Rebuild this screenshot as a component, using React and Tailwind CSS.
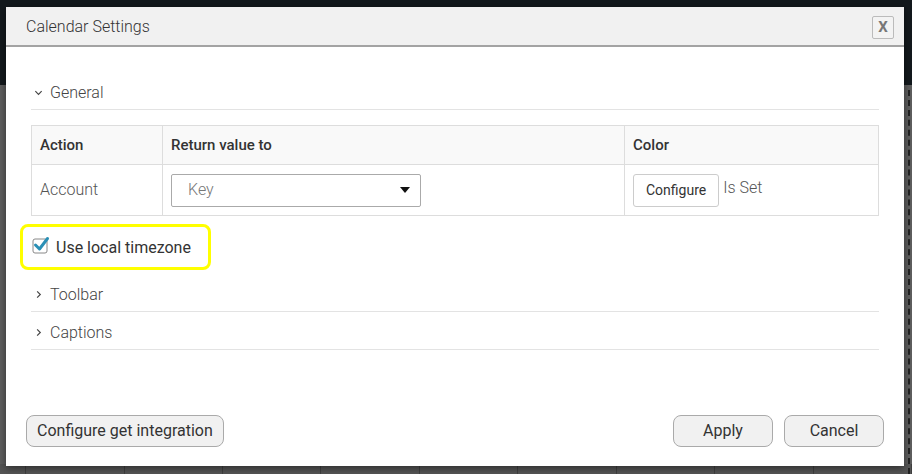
import React from "react";

function Chevron({ down }) {
  return (
    <svg width="9" height="9" viewBox="0 0 10 10" className="shrink-0">
      {down ? (
        <path d="M1.5 3.5 L5 7 L8.5 3.5" fill="none" stroke="#444" strokeWidth="1.3" />
      ) : (
        <path d="M3.5 1.5 L7 5 L3.5 8.5" fill="none" stroke="#444" strokeWidth="1.3" />
      )}
    </svg>
  );
}

function Section({ title, open }) {
  return (
    <div className="flex items-center gap-[7px] h-[38px] pt-[4px] border-b border-[#e3e3e3] pl-[3px] text-[16px] font-light text-[#444]">
      <Chevron down={open} />
      <span>{title}</span>
    </div>
  );
}

export default function App() {
  const font = { fontFamily: "Roboto, 'Liberation Sans', sans-serif" };
  return (
    <div className="relative w-[912px] h-[474px] overflow-hidden bg-[#5f5f5f]" style={font}>
      {/* dimmed page behind */}
      <div className="h-[85px] bg-[#13191d]" />
      <div className="absolute left-0 right-0 bottom-0 h-[10px] flex bg-[#555]">
        {[28, 106, 106, 106, 106, 106, 106, 106, 106, 106].map((w, i) => (
          <div key={i} className="border-r border-[#404040] h-full" style={{ width: w }} />
        ))}
      </div>
      <div className="absolute right-[2px] top-[90px] bottom-0 border-r-2 border-dashed border-[#222]" />

      {/* modal */}
      <div className="absolute left-[6px] top-[7px] w-[898px] h-[459px] bg-white flex flex-col shadow-[0_2px_8px_rgba(0,0,0,0.5)]">
        <div className="h-[40px] bg-[#f1f1f1] border-b-2 border-[#a3a3a3] flex items-center justify-between pl-[20px] pr-[10px]">
          <span className="text-[16px] text-[#333] font-light mt-[2px]">Calendar Settings</span>
          <button className="w-[22px] h-[23px] mt-[2px] border border-[#bbb] rounded-[2px] bg-[#f3f3f3] flex items-center justify-center text-[15px] font-bold text-[#777] leading-none">
            X
          </button>
        </div>

        <div className="flex-1 flex flex-col px-[25px] pt-[25px]">
          <Section title="General" open />

          <div className="mt-[15px] border border-[#ddd] text-[15px]">
            <div className="flex h-[39px] bg-[#f9f9f9] border-b border-[#ddd] font-medium text-[#333]">
              <div className="w-[131px] border-r border-[#ddd] flex items-center pl-[8px]">Action</div>
              <div className="w-[462px] border-r border-[#ddd] flex items-center pl-[8px]">Return value to</div>
              <div className="flex-1 flex items-center pl-[8px]">Color</div>
            </div>
            <div className="flex h-[50px] text-[#666]">
              <div className="w-[131px] border-r border-[#ddd] flex items-center pl-[8px] font-light text-[16px] text-[#555]">Account</div>
              <div className="w-[462px] border-r border-[#ddd] flex items-center pl-[8px]">
                <div className="w-[250px] h-[33px] border border-[#aaa] rounded-[2px] flex items-center justify-between pl-[16px] pr-[10px] text-[#777] font-light text-[16px]">
                  <span>Key</span>
                  <svg width="10" height="6" viewBox="0 0 10 6">
                    <path d="M0 0 L10 0 L5 6 Z" fill="#111" />
                  </svg>
                </div>
              </div>
              <div className="flex-1 flex items-center pl-[8px] gap-[4px]">
                <button className="h-[33px] px-[12px] border border-[#ccc] rounded-[3px] bg-white text-[14px] text-[#333]">
                  Configure
                </button>
                <span className="-mt-[4px] font-light text-[16px] text-[#555]">Is Set</span>
              </div>
            </div>
          </div>

          <div className="-ml-[11px] mt-[8px] w-[191px] h-[46px] border-[3px] border-[#ffff00] rounded-[8px] flex items-center pl-[9px] gap-[6px]">
            <svg width="18" height="18" viewBox="0 0 18 18" className="-mt-[4px]">
              <rect x="1" y="3" width="14" height="14" rx="2" fill="#fff" stroke="#888" strokeWidth="1" />
              <path d="M3.5 9 L7.5 13 L15.5 2.5" fill="none" stroke="#2a8fb5" strokeWidth="3" strokeLinecap="round" strokeLinejoin="round" />
            </svg>
            <span className="text-[16px] text-[#333] mt-[1px]">Use local timezone</span>
          </div>

          <div className="mt-[4px]">
            <Section title="Toolbar" />
            <Section title="Captions" />
          </div>

          <div className="mt-auto mb-[19px] -ml-[5px] mr-[-5px] flex items-center justify-between">
            <button className="h-[32px] px-[10px] border border-[#aaa] rounded-[8px] bg-[#f1f1f1] text-[16px] text-[#333]">
              Configure get integration
            </button>
            <div className="flex gap-[11px]">
              <button className="w-[100px] h-[32px] border border-[#aaa] rounded-[8px] bg-[#f1f1f1] text-[16px] text-[#333]">Apply</button>
              <button className="w-[100px] h-[32px] border border-[#aaa] rounded-[8px] bg-[#f1f1f1] text-[16px] text-[#333]">Cancel</button>
            </div>
          </div>
        </div>
      </div>
    </div>
  );
}
